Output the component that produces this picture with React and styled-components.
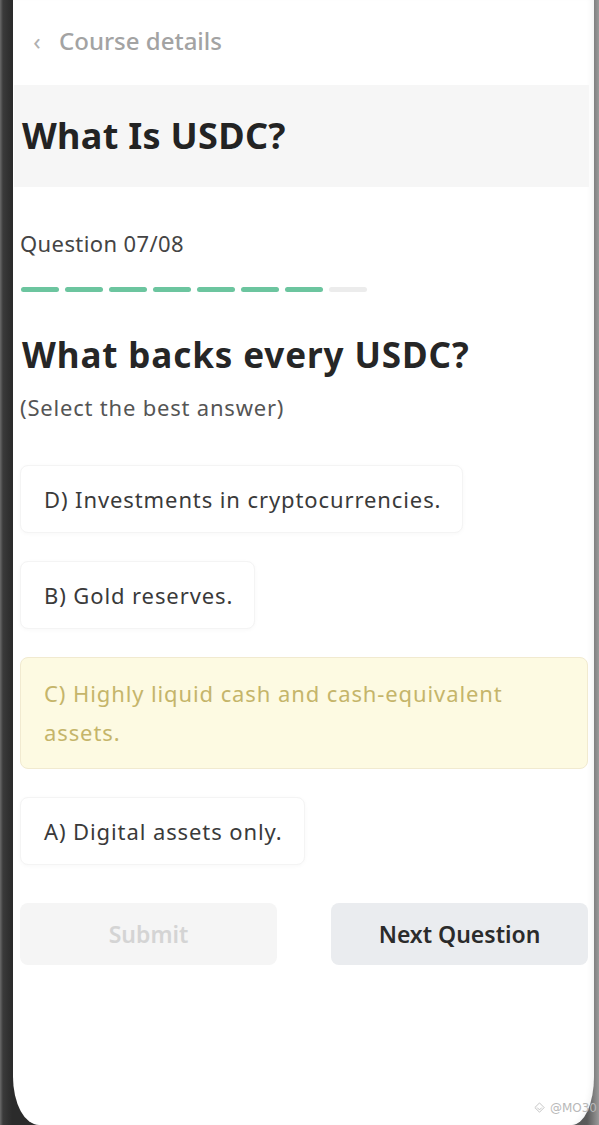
import React from "react";
import styled, { createGlobalStyle } from "styled-components";

const Global = createGlobalStyle`
  html, body { margin: 0; padding: 0; background: #2d2d2d; }
  body { font-family: "Noto Sans", "Open Sans", sans-serif; }
  * { box-sizing: border-box; }
`;

const Phone = styled.div`
  position: relative;
  width: 599px;
  height: 1125px;
  overflow: hidden;
  display: flex;
  background: linear-gradient(90deg, #6a6a6a 0, #3a3a3a 3px, #2b2b2b 12px, #2b2b2b 50%, #5a5a5a 98%, #9a9a9a 100%);
  padding: 0 5px 0 13px;
`;

const Screen = styled.div`
  flex: 1;
  background: #fff;
  border-radius: 0 0 22px 26px / 0 0 48px 48px;
  display: flex;
  flex-direction: column;
  padding: 0 2px 0 1px;
  box-shadow: inset -6px 0 6px -4px rgba(0,0,0,0.06);
`;

const Header = styled.div`
  height: 85px;
  display: flex;
  align-items: center;
  gap: 16px;
  padding: 0 0 4px 17px;
  color: #a3a3a3;
  font-size: 24px;
  font-weight: 500;
`;

const Chevron = styled.span`
  display: inline-flex;
  width: 12px;
  justify-content: center;
  color: #b0b0b0;
  font-weight: 400;
`;

const TitleBand = styled.div`
  height: 102px;
  background: #f6f6f6;
  display: flex;
  align-items: center;
  padding: 0 0 2px 8px;
  margin-right: 3px;
`;

const Title = styled.h1`
  margin: 0;
  font-size: 36px;
  font-weight: 700;
  color: #232323;
  letter-spacing: 0.3px;
`;

const Body = styled.div`
  display: flex;
  flex-direction: column;
  padding: 0 4px 0 6px;
`;

const Counter = styled.div`
  margin-top: 41px;
  font-size: 22px;
  color: #444;
  line-height: 30px;
  letter-spacing: 0.4px;
`;

const Progress = styled.div`
  display: flex;
  gap: 6px;
  margin-top: 29px;
  padding-left: 1px;
`;

const Dash = styled.div`
  width: 38px;
  height: 5px;
  border-radius: 3px;
  background: ${(p) => (p.$done ? "#6cc59f" : "#ececec")};
`;

const Question = styled.h2`
  margin: 41px 0 0 2px;
  font-size: 35px;
  font-weight: 700;
  color: #262626;
  line-height: 44px;
  letter-spacing: 0.9px;
`;

const Hint = styled.div`
  margin-top: 15px;
  font-size: 22px;
  color: #555;
  line-height: 30px;
  letter-spacing: 0.8px;
`;

const Options = styled.div`
  display: flex;
  flex-direction: column;
  align-items: flex-start;
  gap: 28px;
  margin-top: 43px;
`;

const Option = styled.div`
  align-self: ${(p) => (p.$selected ? "stretch" : "flex-start")};
  min-height: 68px;
  display: flex;
  align-items: center;
  padding: ${(p) => (p.$selected ? "16px 22px 16px 23px" : "12px 21px 12px 23px")};
  border-radius: 8px;
  font-size: 22px;
  line-height: 39px;
  letter-spacing: 0.9px;
  border: 1px solid ${(p) => (p.$selected ? "#f1ead0" : "#f4f4f4")};
  background: ${(p) => (p.$selected ? "#fdfae2" : "#fff")};
  color: ${(p) => (p.$selected ? "#c5b56a" : "#3a3a3a")};
  box-shadow: ${(p) => (p.$selected ? "none" : "0 1px 4px rgba(0,0,0,0.03)")};
`;

const Actions = styled.div`
  display: flex;
  justify-content: space-between;
  gap: 54px;
  margin-top: 38px;
`;

const Button = styled.div`
  flex: 1;
  height: 62px;
  border-radius: 8px;
  display: flex;
  align-items: center;
  justify-content: center;
  font-size: 23px;
  font-weight: 600;
  background: ${(p) => (p.$primary ? "#eaecef" : "#f5f5f5")};
  color: ${(p) => (p.$primary ? "#2b2b2b" : "#d4d4d4")};
`;

const Watermark = styled.div`
  position: absolute;
  right: 2px;
  bottom: 10px;
  display: flex;
  align-items: center;
  gap: 4px;
  font-family: "DejaVu Sans", sans-serif;
  font-size: 12px;
  color: #b8b8b8;
`;

const DiamondIcon = () => (
  <svg width="13" height="13" viewBox="0 0 14 14" fill="none" stroke="#c0c0c0" strokeWidth="1">
    <path d="M7 1 L12 6 L7 11 L2 6 Z" />
    <path d="M4.5 6 L7 8.5 L9.5 6" />
  </svg>
);

export default function App() {
  const done = [1, 1, 1, 1, 1, 1, 1, 0];
  return (
    <>
      <Global />
      <Phone>
        <Screen>
          <Header>
            <Chevron>‹</Chevron>
            <span>Course details</span>
          </Header>
          <TitleBand>
            <Title>What Is USDC?</Title>
          </TitleBand>
          <Body>
            <Counter>Question 07/08</Counter>
            <Progress>
              {done.map((d, i) => (
                <Dash key={i} $done={!!d} />
              ))}
            </Progress>
            <Question>What backs every USDC?</Question>
            <Hint>(Select the best answer)</Hint>
            <Options>
              <Option>D) Investments in cryptocurrencies.</Option>
              <Option>B) Gold reserves.</Option>
              <Option $selected>C) Highly liquid cash and cash-equivalent assets.</Option>
              <Option>A) Digital assets only.</Option>
            </Options>
            <Actions>
              <Button>Submit</Button>
              <Button $primary>Next Question</Button>
            </Actions>
          </Body>
        </Screen>
        <Watermark>
          <DiamondIcon />
          <span>@MO30</span>
        </Watermark>
      </Phone>
    </>
  );
}
